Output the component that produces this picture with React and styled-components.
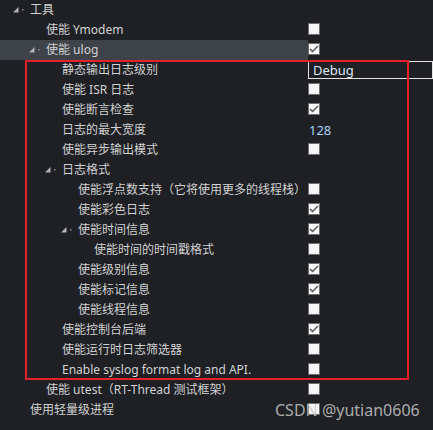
import React from 'react';
import styled, { createGlobalStyle } from 'styled-components';

const GlobalStyle = createGlobalStyle`
  html, body {
    margin: 0;
    padding: 0;
    background: #1e2024;
  }
  body {
    font-family: "Noto Sans", "Noto Sans CJK SC", sans-serif;
    font-size: 12px;
    color: #d2d2d2;
  }
`;

// settings tree, top to bottom
const rows = [
  { label: '工具', level: 0, open: true },
  { label: '使能 Ymodem', level: 1, check: false },
  { label: '使能 ulog', level: 1, open: true, check: true, selected: true },
  { label: '静态输出日志级别', level: 2, select: 'Debug' },
  { label: '使能 ISR 日志', level: 2, check: false },
  { label: '使能断言检查', level: 2, check: true },
  { label: '日志的最大宽度', level: 2, text: '128' },
  { label: '使能异步输出模式', level: 2, check: false },
  { label: '日志格式', level: 2, open: true },
  { label: '使能浮点数支持（它将使用更多的线程栈）', level: 3, check: false },
  { label: '使能彩色日志', level: 3, check: true },
  { label: '使能时间信息', level: 3, open: true, check: true },
  { label: '使能时间的时间戳格式', level: 4, check: false },
  { label: '使能级别信息', level: 3, check: true },
  { label: '使能标记信息', level: 3, check: true },
  { label: '使能线程信息', level: 3, check: false },
  { label: '使能控制台后端', level: 2, check: true },
  { label: '使能运行时日志筛选器', level: 2, check: false },
  { label: 'Enable syslog format log and API.', level: 2, check: false },
  { label: '使能 utest（RT-Thread 测试框架）', level: 1, check: false },
  { label: '使用轻量级进程', level: 0, check: false },
];

const Page = styled.div`
  position: relative;
  width: 433px;
  height: 430px;
  overflow: hidden;
`;

const Tree = styled.div`
  display: flex;
  flex-direction: column;
`;

const Row = styled.div`
  display: flex;
  height: 20px;
`;

const NameCell = styled.div`
  width: 308px;
  flex-shrink: 0;
  display: flex;
  align-items: center;
  padding-left: ${p => 13 + p.level * 16}px;
  box-sizing: border-box;
  background: ${p => (p.selected ? '#3e4249' : 'transparent')};
  white-space: nowrap;
  line-height: 20px;
`;

const Expander = styled.span`
  width: 17px;
  flex-shrink: 0;
  display: flex;
  align-items: center;
`;

const ValueCell = styled.div`
  flex: 1;
  display: flex;
  align-items: flex-start;
  min-width: 0;
`;

const Box = styled.span`
  margin-top: 3px;
  width: 12px;
  height: 12px;
  box-sizing: border-box;
  background: #f6f6f6;
  border: 1px solid #6e6e6e;
  display: flex;
  align-items: center;
  justify-content: center;
`;

const Plain = styled.span`
  line-height: 20px;
  padding-left: 1px;
  color: #a9d1f5;
  font-size: 13px;
`;

const Select = styled.div`
  margin-top: 1px;
  height: 18px;
  width: 140px;
  box-sizing: border-box;
  border: 1px solid #e4e4e4;
  padding-left: 4px;
  line-height: 16px;
  color: #dce6f4;
  font-size: 13px;
`;

const Mark = styled.div`
  position: absolute;
  left: 25px;
  top: 60px;
  width: 384px;
  height: 320px;
  box-sizing: border-box;
  border: 2px solid #e5202b;
  pointer-events: none;
`;

const Watermark = styled.div`
  position: absolute;
  left: 275px;
  top: 399px;
  font-family: "Noto Sans", "Liberation Sans", sans-serif;
  font-size: 16px;
  line-height: 22px;
  color: rgba(200, 200, 200, 0.85);
  white-space: nowrap;
`;

const Triangle = () => (
  <svg width="12" height="8" viewBox="0 0 12 8">
    <polygon points="0,6.5 5.5,1 5.5,6.5" fill="#b4b4b4" />
    <rect x="9" y="3" width="1.5" height="1.5" fill="#8c8c8c" />
  </svg>
);

const Tick = () => (
  <svg width="10" height="10" viewBox="0 0 10 10">
    <polyline points="1,5 3.5,7.5 9,2" fill="none" stroke="#505050" strokeWidth="1.3" />
  </svg>
);

const Value = ({ row }) => {
  if (row.select) return <Select>{row.select}</Select>;
  if (row.text) return <Plain>{row.text}</Plain>;
  if (row.check === undefined) return null;
  return <Box>{row.check && <Tick />}</Box>;
};

const App = () => (
  <Page>
    <GlobalStyle />
    <Tree>
      {rows.map((row, i) => (
        <Row key={i}>
          <NameCell level={row.level} selected={row.selected}>
            <Expander>{row.open && <Triangle />}</Expander>
            {row.label}
          </NameCell>
          <ValueCell>
            <Value row={row} />
          </ValueCell>
        </Row>
      ))}
    </Tree>
    <Mark />
    <Watermark>CSDN @yutian0606</Watermark>
  </Page>
);

export default App;
